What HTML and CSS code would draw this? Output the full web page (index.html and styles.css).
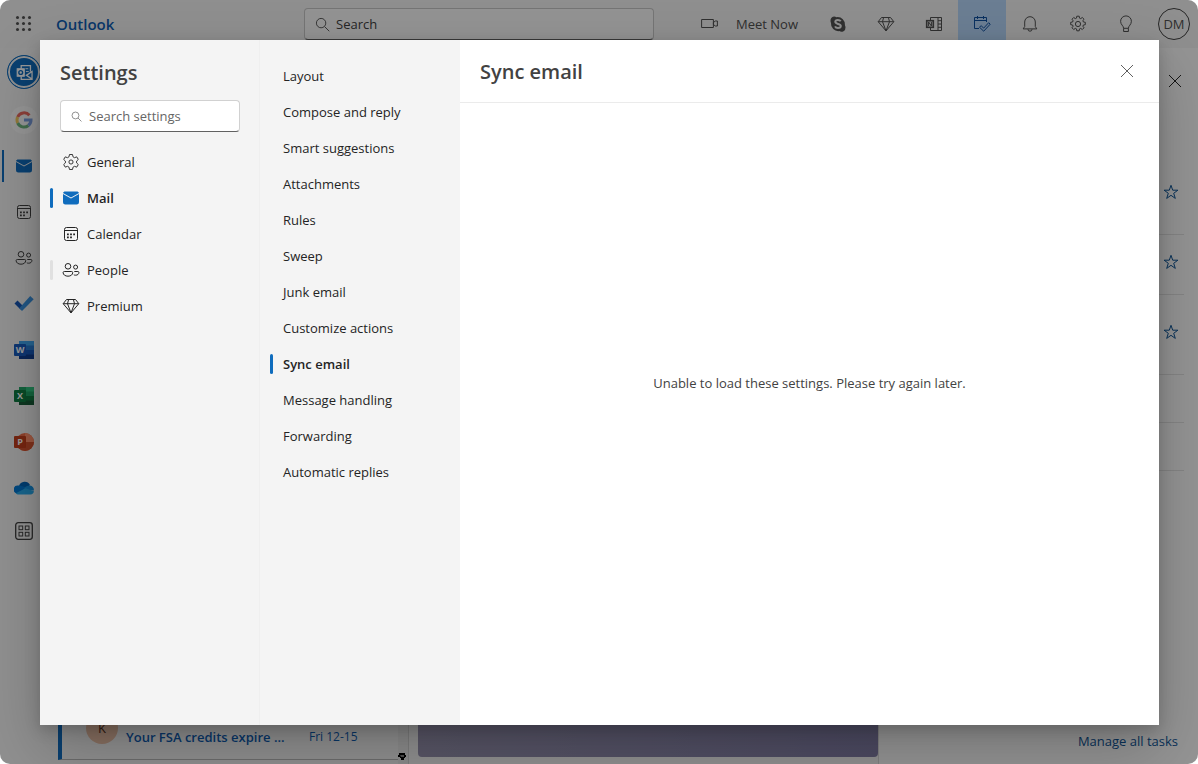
FILE: index.html
```html
<!DOCTYPE html>
<html lang="en">
<head>
<meta charset="utf-8">
<title>Outlook - Settings</title>
<link rel="stylesheet" href="styles.css">
</head>
<body>
<svg class="defs" aria-hidden="true">
  <symbol id="i-search" viewBox="0 0 16 16"><circle cx="6.500" cy="6.500" r="5"/><path d="M10.200 10.200l5 5"/></symbol>
  <symbol id="i-close" viewBox="0 0 14 14"><path d="M1 1l12 12M13 1L1 13"/></symbol>
  <symbol id="i-mail" viewBox="0 0 18 18"><path fill="currentColor" stroke="none" d="M1 5l8 4.500L17 5v8.200a2.300 2.300 0 0 1-2.300 2.300H3.300A2.300 2.300 0 0 1 1 13.200zM3.300 2.500h11.400c1.200 0 2.100.7 2.300 1.500L9 8.400 1 4c.2-.8 1.100-1.500 2.300-1.500z"/></symbol>
  <symbol id="i-calendar" viewBox="0 0 18 18"><rect x="2.500" y="2.500" width="13" height="13" rx="2"/><path d="M2.500 5.500h13"/><path d="M5 9.300h1.800M8.100 9.300h1.800M11.200 9.300H13M5 12.300h1.800M8.100 12.300h1.800" stroke-width="1.700"/></symbol>
  <symbol id="i-people" viewBox="0 0 18 18"><circle cx="6" cy="5.300" r="2.800"/><circle cx="13.600" cy="6.100" r="2"/><path d="M2.300 10.500h7.400c.6 0 1 .4 1 1 0 2.300-2 3.700-4.700 3.700s-4.900-1.400-4.900-3.700c0-.6.600-1 1.200-1zM12.300 10.500h3.600c.6 0 1 .4 1 1 0 1.700-1.400 2.700-3.300 2.700-.7 0-1.300-.1-1.800-.4"/></symbol>
  <symbol id="i-diamond" viewBox="0 0 18 18"><path d="M4.500 2.500h9l3.300 4.200L9 15.900 1.200 6.700zM1.200 6.700h15.600M6.600 2.500L5.500 6.700 9 15.900l3.500-9.200-1.100-4.200"/></symbol>
  <symbol id="i-gear" viewBox="0 0 20 20"><circle cx="10" cy="10" r="2.300"/><path d="M8.300 1.700h3.400l.5 2.500 1.700 1 2.500-.9 1.700 2.900L16.200 9v2l1.900 1.800-1.700 2.900-2.500-.9-1.700 1-.5 2.500H8.300l-.5-2.500-1.700-1-2.500.9-1.700-2.900L3.800 11V9L1.900 7.200l1.700-2.900 2.500.9 1.700-1z" stroke-linejoin="round"/></symbol>
  <symbol id="i-cog" viewBox="0 0 18 18"><circle cx="9" cy="9" r="2.600"/><path d="M7.800 1.200h2.400l.3 1.900 1.200.5 1.600-1.100 1.700 1.700-1.100 1.600.5 1.200 1.900.3v2.400l-1.900.3-.5 1.200 1.100 1.600-1.700 1.700-1.600-1.100-1.200.5-.3 1.900H7.800l-.3-1.900-1.200-.5-1.600 1.100L3 12.800l1.100-1.600-.5-1.200-1.900-.3V7.300L3.600 7l.5-1.200L3 4.200l1.700-1.700 1.600 1.100 1.200-.5z"/></symbol>
  <symbol id="i-star" viewBox="0 0 16 16"><path d="M8 1.300l1.700 4.900h5.200l-4.200 3.100 1.600 5.100L8 11.300l-4.300 3.100 1.600-5.100L1.100 6.200h5.200z"/></symbol>
</svg>

<div class="app">
  <header class="topbar">
    <button class="slot" aria-label="App launcher">
      <svg class="icon waffle" viewBox="0 0 18 18"><g fill="currentColor" stroke="none"><circle cx="2.500" cy="2.500" r="1.500"/><circle cx="8.500" cy="2.500" r="1.500"/><circle cx="14.500" cy="2.500" r="1.500"/><circle cx="2.500" cy="8.500" r="1.500"/><circle cx="8.500" cy="8.500" r="1.500"/><circle cx="14.500" cy="8.500" r="1.500"/><circle cx="2.500" cy="14.500" r="1.500"/><circle cx="8.500" cy="14.500" r="1.500"/><circle cx="14.500" cy="14.500" r="1.500"/></g></svg>
    </button>
    <a class="brand" href="#">Outlook</a>
    <label class="search">
      <svg class="icon"><use href="#i-search"/></svg>
      <input type="text" placeholder="Search" aria-label="Search">
    </label>
    <button class="meet">
      <svg class="icon" viewBox="0 0 18 18"><path d="M.6 4.500h11.800v8H.6zM12.400 7.500l2-1.500h2v5h-2l-2-1.500z"/></svg>
      Meet Now
    </button>
    <button class="slot" aria-label="Skype">
      <svg class="icon" viewBox="0 0 18 18"><path fill="currentColor" stroke="none" d="M5 1.500c1 0 1.800.3 2.600.7A7.400 7.400 0 0 1 16 10.400c.4.700.5 1.400.5 2.100a4 4 0 0 1-6.200 3.600A7.400 7.400 0 0 1 2 8c-.3-.7-.5-1.400-.5-2.200A4.200 4.200 0 0 1 5 1.500z"/><path class="knock" d="M11.700 6.300C11 5.200 10 4.900 8.900 4.900c-1.500 0-2.600.7-2.600 1.900 0 2.800 5.500 1.500 5.500 4.300 0 1.300-1.200 2-2.800 2-1.400 0-2.500-.6-3-1.700"/></svg>
    </button>
    <button class="slot" aria-label="Premium"><svg class="icon"><use href="#i-diamond"/></svg></button>
    <button class="slot" aria-label="OneNote feed">
      <svg class="icon" viewBox="0 0 18 18"><path d="M5.500 5V2.500h11v13h-11V13M13 2.500v13M13 5.700h3.500M13 9h3.500M13 12.300h3.500"/><rect x="1.700" y="5.700" width="6.600" height="6.600" stroke-width="1.600"/><path d="M3.600 11V7l2.800 4V7"/></svg>
    </button>
    <button class="slot active" aria-label="My Day">
      <svg class="icon" viewBox="0 0 18 18"><path d="M6 13.500H1.500v-11H13.500V7M1.500 5.500h12M4.500 1v3M10.500 1v3M6.500 12.200l1.600-1.500 2.600 2.400 5-5.400 1.500 1.500-6.500 7z"/></svg>
    </button>
    <button class="slot" aria-label="Notifications">
      <svg class="icon" viewBox="0 0 18 18"><path d="M2.200 13.900l1.500-2.400V7a5.300 5.300 0 0 1 10.600 0v4.500l1.500 2.400zM7 14.200a2 2 0 0 0 4 0"/></svg>
    </button>
    <button class="slot" aria-label="Settings"><svg class="icon"><use href="#i-cog"/></svg></button>
    <button class="slot" aria-label="Tips">
      <svg class="icon" viewBox="0 0 18 18"><path d="M6.600 13.300c0-2.500-3-3.600-3-7a5.400 5.400 0 0 1 10.800 0c0 3.400-3 4.500-3 7zM6.600 13.300v3.200h4.800v-3.200"/></svg>
    </button>
    <button class="slot" aria-label="Account"><span class="account">DM</span></button>
  </header>

  <div class="workspace">
    <nav class="rail" aria-label="Apps">
      <button class="profile" aria-label="Outlook account">
        <svg class="icon" viewBox="0 0 18 18"><path d="M5.500 5V1.700h9.800V8M5.500 13v3.300H17V8l-6 4 6 4" stroke-width="1.400"/><path d="M10 5h3M10.500 8h3"/><rect x="1.200" y="5" width="7.600" height="8" fill="currentColor"/><circle class="ring" cx="5" cy="9" r="2" stroke-width="1.500"/></svg>
      </button>
      <button class="google" aria-label="Google account">
        <svg viewBox="0 0 18 18"><path stroke="#ea6a60" d="M14.400 4.300A7 7 0 0 0 2.700 6"/><path stroke="#f0c75e" d="M2.700 6a7 7 0 0 0 0 6"/><path stroke="#6fb57e" d="M2.700 12a7 7 0 0 0 10.700 2.500"/><path stroke="#7c9fe0" d="M13.400 14.500A7 7 0 0 0 16 9H9"/></svg>
      </button>
      <button class="app-link current" aria-label="Mail"><svg class="icon"><use href="#i-mail"/></svg></button>
      <button class="app-link" aria-label="Calendar"><svg class="icon"><use href="#i-calendar"/></svg></button>
      <button class="app-link" aria-label="People"><svg class="icon"><use href="#i-people"/></svg></button>
      <button class="app-link" aria-label="To Do">
        <svg class="logo" viewBox="0 0 20 20"><path fill="#1756b4" d="M.5 9.500l3-3 6 6-3 3z"/><path fill="#3a90dc" d="M5.300 14.300L16.200 2l3.500 3.200L8 17z"/></svg>
      </button>
      <button class="app-link" aria-label="Word">
        <svg class="logo" viewBox="0 0 20 20"><path fill="#41a5ee" d="M5 1h15v5H5z"/><path fill="#2b7cd3" d="M5 5.500h15V10H5z"/><path fill="#185abd" d="M5 10h15v5H5z"/><path fill="#103f91" d="M5 14.500h15V19H5z"/><rect fill="#185abd" y="4" width="12" height="12" rx="1"/><text x="6" y="13">W</text></svg>
      </button>
      <button class="app-link" aria-label="Excel">
        <svg class="logo" viewBox="0 0 20 20"><path fill="#21a366" d="M5 1h8v9H5z"/><path fill="#33c481" d="M12 1h8v5h-8z"/><path fill="#21a366" d="M12 5.500h8V10h-8z"/><path fill="#107c41" d="M5 10h15v5H5z"/><path fill="#185c37" d="M5 14.500h15V19H5z"/><rect fill="#107c41" y="4" width="12" height="12" rx="1"/><text x="6" y="13">X</text></svg>
      </button>
      <button class="app-link" aria-label="PowerPoint">
        <svg class="logo" viewBox="0 0 20 20"><circle fill="#ed6c47" cx="11" cy="10" r="9"/><path fill="#ff8f6b" d="M11 1a9 9 0 0 1 9 9h-9z"/><path fill="#d35230" d="M2 10h18a9 9 0 0 1-18 0z"/><rect fill="#c43e1c" y="4" width="12" height="12" rx="1"/><text x="6" y="13">P</text></svg>
      </button>
      <button class="app-link" aria-label="OneDrive">
        <svg class="logo" viewBox="0 0 20 20"><path fill="#0364b8" d="M5 8a6 6 0 0 1 11-1l-6 6z"/><path fill="#0078d4" d="M4.500 7.500c3-.5 7 2 10 4L3 15.500A4 4 0 0 1 4.500 7.500z"/><path fill="#1490df" d="M16 7.600a4.200 4.200 0 0 1 3.800 5L12 12l-2-2c1.500-1.500 3.500-2.500 6-2.400z"/><path fill="#28a8ea" d="M11.500 10.300l8.300 2.700c.2 2-1.500 3.500-3.300 3.500h-12c-1 0-2-.5-2.800-1.300z"/></svg>
      </button>
      <button class="app-link more" aria-label="More apps">
        <svg class="icon" viewBox="0 0 18 18"><rect x=".7" y=".7" width="16.600" height="16.600" rx="2.500" stroke-width="1.300"/><rect x="4" y="4" width="3.700" height="3.700"/><rect x="10.300" y="4" width="3.700" height="3.700"/><rect x="4" y="10.300" width="3.700" height="3.700"/><rect x="10.300" y="10.300" width="3.700" height="3.700"/></svg>
      </button>
    </nav>

    <section class="mail-list" aria-label="Messages">
      <a class="message" href="#">
        <span class="avatar">K</span>
        <span class="subject">Your FSA credits expire ...</span>
        <span class="date">Fri 12-15</span>
      </a>
      <div class="scroll-track">
        <svg viewBox="0 0 8 8"><path d="M1 0h6v2h1v2H7v1H6v2H3V5H2V4H0V2h1z"/><path class="glint" d="M2 2h4v2H3z"/></svg>
      </div>
    </section>

    <section class="reading" aria-label="Reading pane"><div class="photo"></div></section>

    <aside class="tasks" aria-label="My Day">
      <div class="tasks-head"><button aria-label="Close tasks"><svg class="icon"><use href="#i-close"/></svg></button></div>
      <ul>
        <li class="tall"><button aria-label="Star task"><svg class="icon"><use href="#i-star"/></svg></button></li>
        <li class="medium"><button aria-label="Star task"><svg class="icon"><use href="#i-star"/></svg></button></li>
        <li class="tall"><button aria-label="Star task"><svg class="icon"><use href="#i-star"/></svg></button></li>
        <li></li>
        <li></li>
      </ul>
      <a class="manage" href="#">Manage all tasks</a>
    </aside>
  </div>

  <div class="overlay">
    <div class="dialog" role="dialog" aria-label="Settings">
      <div class="categories">
        <h1>Settings</h1>
        <label class="settings-search">
          <svg class="icon"><use href="#i-search"/></svg>
          <input type="text" placeholder="Search settings" aria-label="Search settings">
        </label>
        <nav class="nav" aria-label="Settings categories">
          <button><svg class="icon"><use href="#i-gear"/></svg>General</button>
          <button class="selected"><svg class="icon"><use href="#i-mail"/></svg>Mail</button>
          <button><svg class="icon"><use href="#i-calendar"/></svg>Calendar</button>
          <button class="hinted"><svg class="icon"><use href="#i-people"/></svg>People</button>
          <button><svg class="icon"><use href="#i-diamond"/></svg>Premium</button>
        </nav>
      </div>
      <nav class="nav sections" aria-label="Mail settings">
        <button>Layout</button>
        <button>Compose and reply</button>
        <button>Smart suggestions</button>
        <button>Attachments</button>
        <button>Rules</button>
        <button>Sweep</button>
        <button>Junk email</button>
        <button>Customize actions</button>
        <button class="selected">Sync email</button>
        <button>Message handling</button>
        <button>Forwarding</button>
        <button>Automatic replies</button>
      </nav>
      <section class="panel">
        <header class="panel-head">
          <h2>Sync email</h2>
          <button aria-label="Close settings"><svg class="icon"><use href="#i-close"/></svg></button>
        </header>
        <p class="notice">Unable to load these settings. Please try again later.</p>
      </section>
    </div>
  </div>
</div>
</body>
</html>
```
FILE: styles.css
```css
* { box-sizing: border-box; }

body {
  margin: 0;
  background: #fff;
  color: #242424;
  font: 13px/20px "Open Sans", "Noto Sans", sans-serif;
}

button {
  display: flex;
  align-items: center;
  justify-content: center;
  padding: 0;
  border: 0;
  background: none;
  color: inherit;
  font: inherit;
}

a { text-decoration: none; }

input {
  flex: 1;
  min-width: 0;
  padding: 0;
  border: 0;
  outline: 0;
  background: none;
  font: inherit;
}

ul { margin: 0; padding: 0; list-style: none; }

.defs { position: absolute; width: 0; height: 0; }

.icon {
  flex: none;
  width: 18px;
  height: 18px;
  fill: none;
  stroke: currentColor;
}

.app {
  position: relative;
  display: flex;
  flex-direction: column;
  height: 100vh;
  overflow: hidden;
  border-radius: 10px;
  background: #f0f0f0;
}

/* Top bar */
.topbar {
  display: flex;
  align-items: center;
  height: 48px;
  background: #eeeeee;
  color: #505050;
}

.slot { flex: none; width: 48px; height: 48px; }
.slot.active { background: #b2d2f5; color: #0f50a0; }
.knock { stroke: #eeeeee; stroke-width: 2; }

.brand {
  width: 256px;
  padding-left: 8px;
  color: #0f5cb0;
  font-size: 15px;
  font-weight: 600;
}

.search {
  display: flex;
  align-items: center;
  gap: 6px;
  width: 350px;
  height: 32px;
  padding: 0 10px;
  border: 1px solid #c4c4c4;
  border-bottom-color: #606060;
  border-radius: 4px;
  background: #f6f6f6;
}
.search .icon { width: 15px; height: 15px; }
.search input::placeholder { color: #404040; opacity: 1; }

.meet { gap: 17px; margin-left: auto; padding-right: 16px; }

.account {
  width: 32px;
  border: 1px solid #404040;
  border-radius: 50%;
  line-height: 30px;
}

/* Workspace */
.workspace { display: flex; flex: 1; min-height: 0; }

.rail {
  display: flex;
  flex-direction: column;
  align-items: center;
  width: 48px;
  padding-top: 7px;
  color: #404040;
}
.rail button { flex: none; }

.profile {
  width: 34px;
  height: 34px;
  border: 1px solid #0f6cbd;
  border-radius: 50%;
  background: #0f6cbd;
  box-shadow: inset 0 0 0 2px #f0f0f0;
  color: #fff;
}
.profile .icon { width: 17px; height: 17px; }
.ring { stroke: #0f6cbd; }

.google {
  width: 28px;
  height: 28px;
  margin: 17px 0 9px;
  border-radius: 50%;
  background: #f8f8f8;
}
.google svg { width: 18px; height: 18px; fill: none; stroke-width: 3; }

.rail .app-link { width: 48px; height: 46px; }
.rail .current {
  align-self: flex-start;
  width: 42px;
  height: 32px;
  margin: 7px 0 7px 2px;
  padding-right: 1px;
  border-left: 2px solid #0f6cbd;
  color: #0f6cbd;
}
.rail .more { height: 40px; }

.logo { width: 20px; height: 20px; }
.logo text { fill: #fff; font-size: 9px; font-weight: 700; text-anchor: middle; }

.mail-list {
  display: flex;
  align-items: flex-end;
  width: 361px;
  padding-left: 10px;
  border-right: 1px solid #d0d0d0;
}
.message {
  display: flex;
  flex: 1;
  align-items: center;
  height: 64px;
  margin-bottom: 4px;
  border-left: 4px solid #0f6cbd;
  border-bottom: 1px solid #b4b4b4;
  padding-left: 24px;
  color: #0f5cb0;
}
.avatar {
  width: 32px;
  margin-right: 8px;
  border-radius: 50%;
  background: #e6bca4;
  color: #503020;
  line-height: 32px;
  text-align: center;
}
.subject { width: 183px; padding-top: 18px; font-weight: 600; white-space: nowrap; }
.date { padding-top: 18px; font-size: 12px; white-space: nowrap; }

.scroll-track { display: flex; align-items: flex-end; width: 10px; height: 100%; background: #e8e8e8; }
.scroll-track svg { width: 8px; height: 8px; margin-bottom: 3px; }
.glint { fill: #808080; }

.reading { display: flex; flex: 1; padding: 10px 0 7px 9px; }
.photo { flex: 1; border-radius: 4px; background: linear-gradient(90deg, #9490ac, #807ca4); }

.tasks {
  display: flex;
  flex-direction: column;
  width: 320px;
  border-left: 1px solid #d8d8d8;
  background: #f7f7f7;
}
.tasks-head { display: flex; justify-content: flex-end; height: 107px; padding: 26px 16px 0; }
.tasks-head button { width: 14px; height: 14px; }
.tasks-head .icon { width: 14px; height: 14px; }
.tasks ul { margin-right: 14px; }
.tasks li {
  display: flex;
  align-items: center;
  justify-content: flex-end;
  height: 48px;
  padding: 0 5px 5px 0;
  border-bottom: 1px solid #dedede;
}
.tasks .medium { height: 60px; }
.tasks .tall { height: 80px; }
.tasks li .icon { width: 16px; height: 16px; color: #0f5494; }
.manage { margin-top: auto; padding: 0 20px 13px; color: #0f5494; text-align: right; }

/* Settings dialog */
.overlay {
  position: absolute;
  inset: 0;
  display: flex;
  padding: 40px 39px 39px 40px;
  background: rgba(0, 0, 0, 0.4);
}

.dialog {
  display: flex;
  flex: 1;
  background: #f4f4f4;
  box-shadow: 0 25px 58px rgba(0, 0, 0, 0.22), 0 5px 14px rgba(0, 0, 0, 0.18);
}

.categories { width: 220px; padding-top: 19px; border-right: 1px solid #efefef; }

h1, h2 {
  margin: 0;
  color: #424242;
  font-size: 20px;
  font-weight: 600;
  line-height: 28px;
}
h1 { padding-left: 20px; }

.settings-search {
  display: flex;
  align-items: center;
  gap: 7px;
  height: 32px;
  margin: 13px 19px 12px 20px;
  padding: 0 10px;
  border: 1px solid #d1d1d1;
  border-bottom-color: #616161;
  border-radius: 4px;
  background: #fff;
}
.settings-search .icon { width: 11px; height: 11px; color: #606060; }
.settings-search input::placeholder { color: #666; opacity: 1; }

.nav { padding-left: 10px; }
.nav button { gap: 7px; width: 100%; height: 36px; justify-content: flex-start; }
.nav button::before {
  content: "";
  width: 3px;
  height: 20px;
  margin-right: 2px;
  border-radius: 2px;
}
.nav .selected { font-weight: 600; }
.nav .selected::before { background: #0f6cbd; }
.nav .selected .icon { color: #0f6cbd; }
.nav .hinted::before { background: #e0e0e0; }

.sections { width: 200px; padding-top: 18px; }
.sections button::before { margin-right: 3px; }

.panel { display: flex; flex: 1; flex-direction: column; background: #fff; }
.panel-head {
  display: flex;
  align-items: center;
  justify-content: space-between;
  height: 63px;
  padding: 0 25px 0 20px;
  border-bottom: 1px solid #ebebeb;
}
.panel-head h2 { padding-top: 2px; }
.panel-head .icon { width: 14px; height: 14px; color: #606060; }
.notice {
  display: flex;
  flex: 1;
  align-items: center;
  justify-content: center;
  margin: 0;
  padding-bottom: 62px;
  color: #424242;
}
```
